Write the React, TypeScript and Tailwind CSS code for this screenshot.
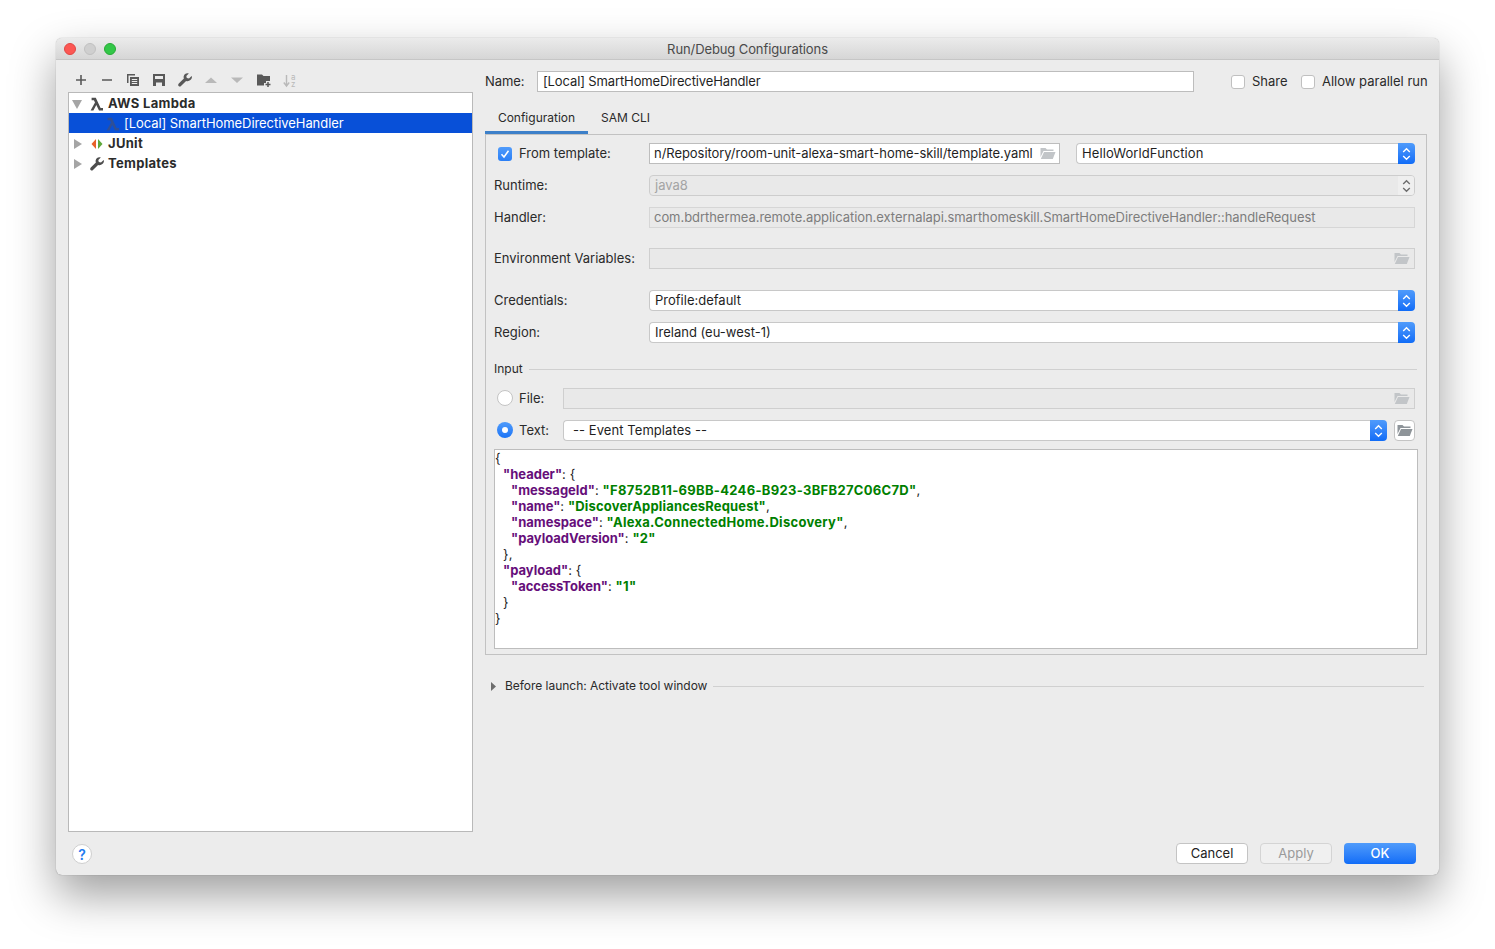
import React from "react";

const UI = "font-['Inter','Liberation_Sans',sans-serif]";

function Lambda({ color = "#4d4d4d" }: { color?: string }) {
  return (
    <svg width="14" height="14" viewBox="0 0 14 14" className="shrink-0">
      <path d="M0.6 13.4 L5 5.6 L3.9 3.2 H1.6 V0.8 H5.8 L10.6 11 H13 V13.4 H9 L6.3 8 L3.4 13.4 Z" fill={color} />
    </svg>
  );
}
function Wrench({ color = "#4d4d4d" }: { color?: string }) {
  return (
    <svg width="14" height="14" viewBox="0 0 14 14" className="shrink-0">
      <path d="M13.6 3.1 L11 5.4 L8.8 4.9 L8.3 2.9 L10.8 .6 C8.6 -.2 6.2 1 5.7 3.2 C5.5 4 5.6 4.8 5.9 5.6 L.8 10.6 C0 11.4 0 12.3 .6 13 C1.3 13.7 2.3 13.7 3 13 L8.1 7.9 C10.6 8.8 13.5 7.2 13.9 4.6 C14 4.1 13.9 3.6 13.6 3.1 Z" fill={color} />
    </svg>
  );
}
function Folder({ color = "#c2c5c8" }: { color?: string }) {
  return (
    <svg width="16" height="13" viewBox="0 0 16 13" className="shrink-0">
      <path d="M0.5 1 H5.5 L7 2.5 H13.5 V4 H3.5 L0.5 10 Z" fill={color} />
      <path d="M4 5 H15.5 L12.8 12 H0.8 Z" fill={color} />
    </svg>
  );
}
function Updown({ color = "#ffffff" }: { color?: string }) {
  return (
    <svg width="9" height="14" viewBox="0 0 9 14" className="shrink-0">
      <path d="M1.2 5 L4.5 1.8 L7.8 5 M1.2 9 L4.5 12.2 L7.8 9" fill="none" stroke={color} strokeWidth="1.4" />
    </svg>
  );
}
function Tri({ dir, color = "#a5a5a5" }: { dir: "down" | "right"; color?: string }) {
  return (
    <svg width="10" height="10" viewBox="0 0 10 10" className="shrink-0">
      {dir === "down" ? <path d="M0 1 H10 L5 10 Z" fill={color} /> : <path d="M1 0 V10 L9 5 Z" fill={color} />}
    </svg>
  );
}

function BlueSelect({ value, className = "", textClass = "pl-[5px]" }: { value: string; className?: string; textClass?: string }) {
  return (
    <div className={`h-[21px] flex items-stretch text-[13px] text-[#1f1f1f] ${className}`}>
      <span className={`flex-1 flex items-center bg-white border-y border-l border-[#c8c8c8] rounded-l-[4px] whitespace-pre ${textClass}`}>{value}</span>
      <span className="w-[17px] rounded-r-[4px] bg-gradient-to-b from-[#4f9bfb] to-[#0f6cf7] flex items-center justify-center">
        <Updown />
      </span>
    </div>
  );
}
function DisabledBrowse({ className = "" }: { className?: string }) {
  return (
    <div className={`h-[21px] bg-[#e9e9e9] border border-[#cfcfcf] flex items-center justify-end pr-[4px] ${className}`}>
      <Folder />
    </div>
  );
}
function Label({ children }: { children: React.ReactNode }) {
  return <span className="w-[155px] shrink-0 text-[13px] text-[#2a2a2a]">{children}</span>;
}
function Radio({ on }: { on?: boolean }) {
  return on ? (
    <span className="ml-[3px] -mt-px w-4 h-4 rounded-full bg-gradient-to-b from-[#4f9bfb] to-[#1a74f6] flex items-center justify-center shrink-0">
      <span className="w-[6px] h-[6px] rounded-full bg-white" />
    </span>
  ) : (
    <span className="ml-[3px] -mt-px w-4 h-4 rounded-full bg-white border border-[#c4c4c4] shrink-0" />
  );
}
function Check({ className = "" }: { className?: string }) {
  return <span className={`w-[14px] h-[14px] rounded-[3px] bg-white border border-[#c0c0c0] shrink-0 ${className}`} />;
}

function Toolbar() {
  const gray = "#595959";
  const light = "#b9b9b9";
  return (
    <div className="h-[32px] flex items-center pl-[6px] pt-[8px] gap-[12px]">
      <svg width="14" height="14" viewBox="0 0 14 14"><path d="M7 2 V12 M2 7 H12" stroke={gray} strokeWidth="1.6" /></svg>
      <svg width="14" height="14" viewBox="0 0 14 14"><path d="M2 7 H12" stroke={gray} strokeWidth="1.6" /></svg>
      <svg width="14" height="14" viewBox="0 0 14 14"><path d="M1 1 H9 V2.5 H2.5 V10 H1 Z M4 4 H13 V13 H4 Z" fill={gray} /><path d="M5.8 6.5 H11.2 M5.8 8.5 H11.2 M5.8 10.5 H11.2" stroke="#ececec" strokeWidth="1" /></svg>
      <svg width="14" height="14" viewBox="0 0 14 14"><path d="M1 1 H13 V13 H1 Z" fill={gray} /><path d="M3 3 H11 V6 H3 Z M4 9.5 H10 V13 H4 Z" fill="#ececec" /></svg>
      <Wrench color={gray} />
      <svg width="14" height="14" viewBox="0 0 14 14"><path d="M1 10 L7 4.5 L13 10 Z" fill={light} /></svg>
      <svg width="14" height="14" viewBox="0 0 14 14"><path d="M1 4.5 L7 10 L13 4.5 Z" fill={light} /></svg>
      <svg width="16" height="14" viewBox="0 0 16 14"><path d="M1 1.5 H6 L7.5 3 H14 V8 H10 V10 H8 V12.5 H1 Z" fill={gray} /><path d="M12 9 V14 M9.5 11.5 H14.5" stroke={gray} strokeWidth="1.5" /></svg>
      <svg width="15" height="15" viewBox="0 0 15 15" className="-ml-[1px]">
        <path d="M3.5 2 V12 M0.8 9.5 L3.5 13 L6.2 9.5" stroke={light} strokeWidth="1.4" fill="none" />
        <text x="8" y="6.5" fontSize="8" fill={light} fontFamily="Inter">a</text>
        <text x="8" y="14" fontSize="8" fill={light} fontFamily="Inter">z</text>
      </svg>
    </div>
  );
}

function TreeRow({ children, selected }: { children: React.ReactNode; selected?: boolean }) {
  return <div className={`h-5 flex items-center pt-[2px] ${selected ? "bg-[#0850d8]" : ""}`}>{children}</div>;
}

function Tree() {
  const bold = "text-[13px] font-bold text-[#2b2b2b] tracking-[0.3px]";
  return (
    <div className="w-[405px] h-[740px] bg-white border border-[#b9b9b9]">
      <TreeRow>
        <span className="ml-[3px] w-[18px] flex"><Tri dir="down" /></span>
        <Lambda />
        <span className={`ml-[4px] ${bold}`}>AWS Lambda</span>
      </TreeRow>
      <TreeRow selected>
        <span className="ml-[37px] flex"><Lambda color="#2f4f97" /></span>
        <span className="ml-[4px] text-[13px] text-white whitespace-nowrap tracking-[-0.06px]">[Local] SmartHomeDirectiveHandler</span>
      </TreeRow>
      <TreeRow>
        <span className="ml-[4px] w-[17px] flex"><Tri dir="right" /></span>
        <svg width="14" height="12" viewBox="0 0 14 12" className="shrink-0">
          <path d="M6 1 V11 L1.5 6 Z" fill="#e8622a" />
          <path d="M8 1 V11 L12.5 6 Z" fill="#5ea83b" />
        </svg>
        <span className={`ml-[4px] ${bold}`}>JUnit</span>
      </TreeRow>
      <TreeRow>
        <span className="ml-[4px] w-[17px] flex"><Tri dir="right" /></span>
        <Wrench />
        <span className={`ml-[4px] ${bold}`}>Templates</span>
      </TreeRow>
    </div>
  );
}

function Key({ children }: { children: React.ReactNode }) {
  return <b className="font-bold text-[#660e7a] tracking-[0px]">{children}</b>;
}
function Str({ children, className = "tracking-[0.3px]" }: { children: React.ReactNode; className?: string }) {
  return <b className={`font-bold text-[#008000] ${className}`}>{children}</b>;
}
function Code() {
  const line = "h-4 whitespace-pre";
  return (
    <div className="mt-[8px] -mr-[3px] h-[200px] bg-white border border-[#bdbdbd] text-[13px] leading-4 text-[#222] tracking-[0.1px]">
      <div className={line}>{"{"}</div>
      <div className={`${line} pl-[8px]`}><Key>"header"</Key>: {"{"}</div>
      <div className={`${line} pl-[16px]`}><Key>"messageId"</Key>: <Str>"F8752B11-69BB-4246-B923-3BFB27C06C7D"</Str>,</div>
      <div className={`${line} pl-[16px]`}><Key>"name"</Key>: <Str className="tracking-[0.16px]">"DiscoverAppliancesRequest"</Str>,</div>
      <div className={`${line} pl-[16px]`}><Key>"namespace"</Key>: <Str className="tracking-[0.28px]">"Alexa.ConnectedHome.Discovery"</Str>,</div>
      <div className={`${line} pl-[16px]`}><Key>"payloadVersion"</Key>: <Str>"2"</Str></div>
      <div className={`${line} pl-[8px]`}>{"},"}</div>
      <div className={`${line} pl-[8px]`}><Key>"payload"</Key>: {"{"}</div>
      <div className={`${line} pl-[16px]`}><Key>"accessToken"</Key>: <Str>"1"</Str></div>
      <div className={`${line} pl-[8px]`}>{"}"}</div>
      <div className={line}>{"}"}</div>
    </div>
  );
}

function Panel() {
  return (
    <div className="h-[521px] border border-[#c2c2c2] pl-[8px] pr-[11px] pt-[8px]">
      <div className="flex items-center h-[21px]">
        <div className="w-[155px] shrink-0 flex items-center pl-[4px]">
          <span className="w-[14px] h-[14px] rounded-[3px] bg-gradient-to-b from-[#4f9bfb] to-[#2a7ff6] flex items-center justify-center shrink-0">
            <svg width="10" height="10" viewBox="0 0 10 10"><path d="M1.5 5.2 L4 8 L8.5 1.8" stroke="#fff" strokeWidth="1.5" fill="none" /></svg>
          </span>
          <span className="ml-[7px] text-[13px] text-[#2a2a2a]">From template:</span>
        </div>
        <div className="w-[411px] h-[21px] bg-white border border-[#bdbdbd] flex items-center pl-[4px] pr-[3px] text-[13px] text-[#1f1f1f] whitespace-nowrap">
          <span className="flex-1 tracking-[-0.05px]">n/Repository/room-unit-alexa-smart-home-skill/template.yaml</span>
          <Folder />
        </div>
        <BlueSelect value="HelloWorldFunction" className="ml-[16px] flex-1" textClass="pl-[5px] tracking-[0.1px]" />
      </div>
      <div className="flex items-center h-[21px] mt-[11px]">
        <Label>Runtime:</Label>
        <div className="flex-1 h-[21px] bg-[#e9e9e9] border border-[#cdcdcd] rounded-[4px] flex items-center text-[13px] text-[#a4a4a4] overflow-hidden">
          <span className="flex-1 pl-[5px]">java8</span>
          <span className="w-4 h-[19px] bg-[#efefef] flex items-center justify-center"><Updown color="#6f6f6f" /></span>
        </div>
      </div>
      <div className="flex items-center h-[21px] mt-[11px]">
        <Label>Handler:</Label>
        <div className="flex-1 h-[21px] bg-[#e9e9e9] border border-[#d6d6d6] flex items-center pl-[4px] text-[13px] text-[#7d7d7d] whitespace-nowrap overflow-hidden tracking-[-0.05px]">
          com.bdrthermea.remote.application.externalapi.smarthomeskill.SmartHomeDirectiveHandler::handleRequest
        </div>
      </div>
      <div className="flex items-center h-[21px] mt-[20px]">
        <Label>Environment Variables:</Label>
        <DisabledBrowse className="flex-1" />
      </div>
      <div className="flex items-center h-[21px] mt-[21px]">
        <Label>Credentials:</Label>
        <BlueSelect value="Profile:default" className="flex-1" />
      </div>
      <div className="flex items-center h-[21px] mt-[11px]">
        <Label>Region:</Label>
        <BlueSelect value="Ireland (eu-west-1)" className="flex-1" />
      </div>
      <div className="flex items-center h-[16px] mt-[18px] gap-[6px] -mr-[2px]">
        <span className="text-[12px] text-[#2a2a2a]">Input</span>
        <span className="flex-1 h-px bg-[#d0d0d0]" />
      </div>
      <div className="flex items-center h-[21px] mt-[11px]">
        <Radio />
        <span className="ml-[6px] w-[44px] text-[13px] text-[#2a2a2a]">File:</span>
        <DisabledBrowse className="flex-1" />
      </div>
      <div className="flex items-center h-[21px] mt-[11px]">
        <Radio on />
        <span className="ml-[6px] w-[44px] text-[13px] text-[#2a2a2a]">Text:</span>
        <BlueSelect value="-- Event Templates --" className="flex-1" textClass="pl-[9px] tracking-[0.07px]" />
        <span className="ml-[7px] w-[21px] h-[21px] bg-white border border-[#c4c4c4] rounded-[4px] flex items-center justify-center">
          <Folder color="#8e9499" />
        </span>
      </div>
      <Code />
    </div>
  );
}

export default function App() {
  return (
    <div className={`w-[1495px] h-[949px] bg-white pl-[56px] pt-[38px] overflow-hidden ${UI}`}>
      <div className="w-[1383px] h-[837px] rounded-[6px] bg-[#ececec] shadow-[0_20px_45px_rgba(0,0,0,0.38),0_0_1px_rgba(0,0,0,0.45)] flex flex-col overflow-hidden">
        <div className="h-[22px] shrink-0 relative flex items-center justify-center pt-[2px] bg-gradient-to-b from-[#ebebeb] to-[#d6d6d6] border-b border-[#c6c6c6]">
          <div className="absolute left-[8px] top-[5px] flex gap-[8px]">
            <span className="w-3 h-3 rounded-full bg-[#fc5753] border border-[#df4744]" />
            <span className="w-3 h-3 rounded-full bg-[#cfcfcf] border border-[#c0c0c0]" />
            <span className="w-3 h-3 rounded-full bg-[#33c748] border border-[#27aa35]" />
          </div>
          <span className="text-[13px] text-[#4a4a4a] tracking-[-0.1px]">Run/Debug Configurations</span>
        </div>
        <div className="flex-1 flex pl-[12px] pr-[12px]">
          <div className="w-[405px] shrink-0 flex flex-col">
            <Toolbar />
            <Tree />
            <div className="mt-[12px] ml-[4px] w-[20px] h-[20px] rounded-full bg-white border border-[#cfcfcf] flex items-center justify-center text-[14px] font-semibold text-[#1f7cf0]">?</div>
          </div>
          <div className="ml-[12px] flex-1 min-w-0 flex flex-col">
            <div className="mt-[11px] h-[21px] flex items-center">
              <span className="w-[52px] shrink-0 text-[13px] text-[#2a2a2a] tracking-[-0.1px]">Name:</span>
              <div className="w-[657px] h-[21px] shrink-0 bg-white border border-[#bdbdbd] flex items-center pl-[5px] text-[13px] text-[#1f1f1f] whitespace-nowrap tracking-[-0.12px]">[Local] SmartHomeDirectiveHandler</div>
              <Check className="ml-[37px]" />
              <span className="ml-[7px] text-[13px] text-[#2a2a2a] w-[35px] shrink-0">Share</span>
              <Check className="ml-[14px]" />
              <span className="ml-[7px] text-[13px] text-[#2a2a2a] whitespace-nowrap">Allow parallel run</span>
            </div>
            <div className="mt-[11px] h-[31px] flex items-stretch text-[12px] text-[#2a2a2a]">
              <span className="w-[103px] flex items-center justify-center border-b-[3px] border-[#3d80c9] pt-[1px]">Configuration</span>
              <span className="ml-[13px] flex items-center pb-[2px]">SAM CLI</span>
            </div>
            <Panel />
            <div className="mt-[23px] h-[16px] flex items-center">
              <span className="ml-[5px] flex"><svg width="7" height="9" viewBox="0 0 7 9"><path d="M1 0 V9 L6 4.5 Z" fill="#6d6d6d" /></svg></span>
              <span className="ml-[8px] text-[12px] text-[#2a2a2a] whitespace-nowrap tracking-[-0.03px]">Before launch: Activate tool window</span>
              <span className="ml-[6px] flex-1 h-px bg-[#d0d0d0]" />
              <span className="w-[3px]" />
            </div>
            <div className="mt-[149px] h-[21px] flex items-center justify-end pr-[11px]">
              <span className="w-[72px] h-[21px] bg-white border border-[#c4c4c4] rounded-[4px] flex items-center justify-center text-[13px] text-[#222]">Cancel</span>
              <span className="ml-[12px] w-[72px] h-[21px] bg-[#f0f0f0] border border-[#d4d4d4] rounded-[4px] flex items-center justify-center text-[13px] text-[#9a9a9a]">Apply</span>
              <span className="ml-[12px] w-[72px] h-[21px] bg-gradient-to-b from-[#4f9bfb] to-[#0f6cf7] rounded-[4px] flex items-center justify-center text-[13px] font-medium text-white">OK</span>
            </div>
          </div>
        </div>
      </div>
    </div>
  );
}
